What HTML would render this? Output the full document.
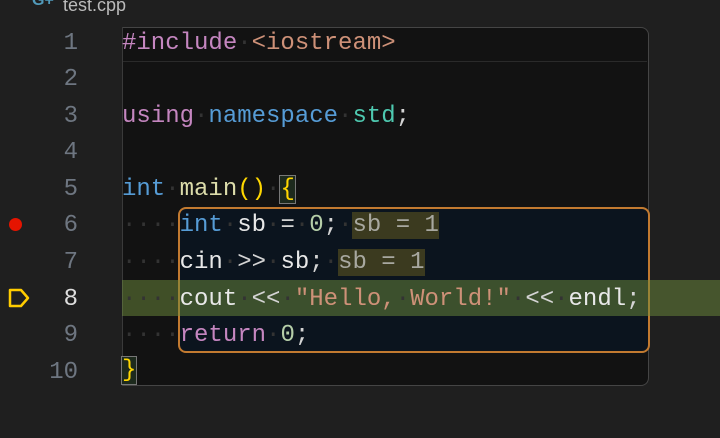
<!DOCTYPE html>
<html><head><style>
body{margin:0;width:720px;height:438px;background:#1f1f1f;overflow:hidden;position:relative;font-family:"Liberation Mono","DejaVu Sans Mono",monospace;}
.tab{position:absolute;left:63px;top:-5px;font:18px "Liberation Sans",sans-serif;color:#bbb;}
.ic{position:absolute;left:32px;top:-8px;font:bold 16px "Liberation Sans",sans-serif;color:#519aba;}
.ed{position:absolute;left:122px;top:27px;width:527px;height:359px;background:#121212;border:1px solid #454545;border-left:1px solid #3a3a3a;border-radius:0 8px 8px 0;box-sizing:border-box;}
.sep{position:absolute;left:123px;top:61px;width:524px;height:1px;background:#2a2a2a;}
.hl{position:absolute;left:122px;top:280px;width:598px;height:36px;background:rgba(110,140,60,0.5);}
.box{position:absolute;left:178px;top:207px;width:472px;height:146px;box-sizing:border-box;border:2px solid #c27a30;border-radius:8px;background:#0b141e;}
.ln{position:absolute;left:0;width:78px;text-align:right;font-size:24px;line-height:36px;color:#6e7681;}
.c{position:absolute;left:122px;font-size:24px;line-height:36px;color:#d4d4d4;white-space:pre;}
.d{color:#333;}
.k{color:#c586c0}.b{color:#569cd6}.s{color:#ce9178}.t{color:#4ec9b0}.f{color:#dcdcaa}.n{color:#b5cea8}.y{color:#ffd700}.w{color:#e8e8e8}
.hint{background:#3b3a1f;color:#a8a8a0;}
.br{outline:1px solid #777;background:#1d2a1d;}
</style></head><body>
<div class="ic">G+</div><div class="tab">test.cpp</div>
<div class="ed"></div><div class="sep"></div>
<div class="box"></div>
<div class="hl"></div>
<div style="position:absolute;left:9px;top:218px;width:13px;height:13px;border-radius:50%;background:#e51400"></div>
<svg style="position:absolute;left:7px;top:287px" width="24" height="22"><path d="M3 3 H14 L21 11 L14 19 H3 Z" fill="none" stroke="#ffcc00" stroke-width="2.5" stroke-linejoin="round"/></svg>
<div class="ln" style="top:26px">1</div>
<div class="ln" style="top:62px">2</div>
<div class="ln" style="top:99px">3</div>
<div class="ln" style="top:135px">4</div>
<div class="ln" style="top:172px">5</div>
<div class="ln" style="top:208px">6</div>
<div class="ln" style="top:245px">7</div>
<div class="ln" style="top:282px;color:#ddd">8</div>
<div class="ln" style="top:318px">9</div>
<div class="ln" style="top:355px">10</div>
<div class="c" style="top:26px"><span class="k">#include</span><span class="d">·</span><span class="s">&lt;iostream&gt;</span></div>
<div class="c" style="top:99px"><span class="k">using</span><span class="d">·</span><span class="b">namespace</span><span class="d">·</span><span class="t">std</span>;</div>
<div class="c" style="top:172px"><span class="b">int</span><span class="d">·</span><span class="f">main</span><span class="y">()</span><span class="d">·</span><span class="y br">{</span></div>
<div class="c" style="top:208px"><span class="d">····</span><span class="b">int</span><span class="d">·</span><span class="w">sb</span><span class="d">·</span>=<span class="d">·</span><span class="n">0</span>;<span class="d">·</span><span class="hint">sb = 1</span></div>
<div class="c" style="top:245px"><span class="d">····</span><span class="w">cin</span><span class="d">·</span>&gt;&gt;<span class="d">·</span><span class="w">sb</span>;<span class="d">·</span><span class="hint">sb = 1</span></div>
<div class="c" style="top:282px"><span class="d">····</span><span class="w">cout</span><span class="d">·</span>&lt;&lt;<span class="d">·</span><span class="s">"Hello,<span class="d">·</span>World!"</span><span class="d">·</span>&lt;&lt;<span class="d">·</span><span class="w">endl</span>;</div>
<div class="c" style="top:318px"><span class="d">····</span><span class="k">return</span><span class="d">·</span><span class="n">0</span>;</div>
<div class="c" style="top:353px"><span class="y br">}</span></div>
</body></html>
